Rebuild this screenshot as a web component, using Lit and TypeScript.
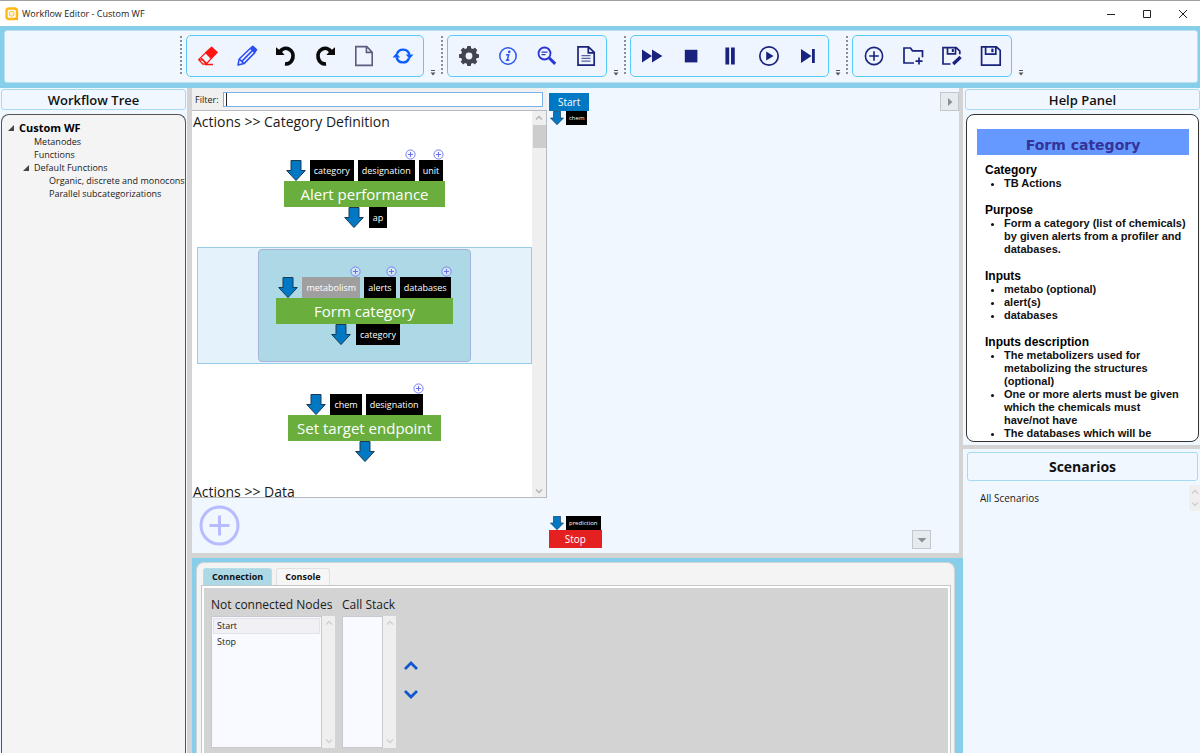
import { LitElement, html, css, svg, nothing } from "lit";
import { customElement, property, state } from "lit/decorators.js";
import { classMap } from "lit/directives/class-map.js";

interface Port {
  name: string;
  muted?: boolean;
  addable?: boolean;
}
interface FlowAction {
  title: string;
  inputs: Port[];
  outputs: Port[];
}

const ACTIONS: FlowAction[] = [
  {
    title: "Alert performance",
    inputs: [{ name: "category" }, { name: "designation", addable: true }, { name: "unit", addable: true }],
    outputs: [{ name: "ap" }],
  },
  {
    title: "Form category",
    inputs: [
      { name: "metabolism", muted: true, addable: true },
      { name: "alerts", addable: true },
      { name: "databases", addable: true },
    ],
    outputs: [{ name: "category" }],
  },
  {
    title: "Set target endpoint",
    inputs: [{ name: "chem" }, { name: "designation", addable: true }],
    outputs: [],
  },
];

const HELP = [
  { title: "Category", items: ["TB Actions"] },
  { title: "Purpose", items: ["Form a category (list of chemicals) by given alerts from a profiler and databases."] },
  { title: "Inputs", items: ["metabo (optional)", "alert(s)", "databases"] },
  {
    title: "Inputs description",
    items: [
      "The metabolizers used for metabolizing the structures (optional)",
      "One or more alerts must be given which the chemicals must have/not have",
      "The databases which will be",
    ],
  },
];

const gearTeeth = [0, 45, 90, 135, 180, 225, 270, 315].map(
  (a) => svg`<rect x="9" y="1" width="4" height="5" rx="0.8" transform="rotate(${a} 11 11)"/>`
);

const ICONS: Record<string, unknown> = {
  erase: svg`<g fill="none" stroke="#ff1414" stroke-width="1.3" stroke-linejoin="round">
    <path d="M8.800 7.600 14.600 2.200l5.600 5.200-5.800 6z" fill="#ff1414"/><path d="M8.800 7.600 1.600 14.600 6 19.200h3l5.400-5.800zM3.800 12.600l5.600 5.600M1.600 14.600l4.200.4 3.400 4M8 19.500h8"/></g>`,
  edit: svg`<g fill="none" stroke="#2a4cf5" stroke-width="1.500" stroke-linejoin="round">
    <path d="M2 20l1.200-6L14.400 3.200l4.400 4.400L8 18.600z"/><path d="M3.200 14l4.800 4.600M5.800 16.400L16.600 5.400"/><path d="M15.200 2.600l1.600-1.400 3.800 3.600-1.400 1.800z" fill="#2a4cf5"/></g>`,
  undo: svg`<path d="M5 6.600A7.200 7.800 0 1 1 10 18.900" fill="none" stroke="#0a0a0a" stroke-width="3.800"/><path d="M1 2.200V10h8.600L7 7z" fill="#0a0a0a"/>`,
  redo: svg`<path d="M17 6.600A7.200 7.800 0 1 0 12 18.900" fill="none" stroke="#0a0a0a" stroke-width="3.800"/><path d="M21 2.200V10h-8.600L15 7z" fill="#0a0a0a"/>`,
  page: svg`<path d="M2.800 1.600h11l5.400 5.600v13.200H2.800zM13.400 1.800v5.600h5.600" fill="none" stroke="#5c5c7c" stroke-width="1.600"/>`,
  sync: svg`<g fill="none" stroke="#0b5cff" stroke-width="2.400"><path d="M5 8.800a6.500 6.500 0 0 1 12.400.8"/><path d="M17 13.200a6.500 6.500 0 0 1-12.400-.8"/></g>
    <path d="M13.800 9.400h7.600l-3.800 4.600zM.6 12.600h7.600L4.400 8z" fill="#0b5cff"/>`,
  gear: svg`<g fill="#44444f">${gearTeeth}</g><circle cx="11" cy="11" r="5.700" fill="none" stroke="#44444f" stroke-width="4.600"/>`,
  info: svg`<circle cx="11" cy="11" r="8.200" fill="none" stroke="#2a55ee" stroke-width="1.500"/><circle cx="12.200" cy="6.900" r="1.300" fill="#2a55ee"/>
    <path d="M9 9.800h2.700l-1.400 5.200h2M8.800 15.200h3" fill="none" stroke="#2a55ee" stroke-width="1.500"/>`,
  search: svg`<g fill="none" stroke="#2a35d8"><circle cx="8.500" cy="8.500" r="6" stroke-width="1.800"/><path d="M5.500 7.200h6M5.500 9.700h4" stroke-width="1.300"/><path d="M13.200 13l6 5.800" stroke-width="3"/></g>`,
  report: svg`<path d="M3 1.800h10.500l5.700 5.600v12.800H3zM13.300 2v5.800h5.700" fill="none" stroke="#1d2378" stroke-width="1.700"/>
    <path d="M6.500 10.600h9M6.500 13.400h9M6.500 16.200h9" stroke="#5a60a8" stroke-width="1.200"/>`,
  forward: svg`<path d="M1 4.500 11 11 1 17.500zM11 4.500 21.400 11 11 17.500z" fill="#19237e"/>`,
  stop: svg`<path d="M4.800 4.800h12.600v12.600H4.800z" fill="#19237e"/>`,
  pause: svg`<path d="M6.400 2.600h3.800v16.800H6.400zM12 2.600h3.800v16.800H12z" fill="#19237e"/>`,
  play: svg`<circle cx="11" cy="11" r="9.200" fill="none" stroke="#19237e" stroke-width="1.700"/><path d="M8.200 6.600 15.600 11l-7.400 4.400z" fill="#19237e"/>`,
  next: svg`<path d="M4 4 14.500 11 4 18zM15 4h2.800v14H15z" fill="#19237e"/>`,
  add: svg`<g fill="none" stroke="#19237e" stroke-width="1.600"><circle cx="11" cy="11" r="8.600"/><path d="M11 6.200v9.600M6.200 11h9.600"/></g>`,
  folder: svg`<path d="M12 18H2V3h6.500l2 2.800h10v6.400M17 12.600v7M13.500 16.100h7" fill="none" stroke="#19237e" stroke-width="1.700"/>`,
  saveas: svg`<g fill="none" stroke="#19237e" stroke-width="1.700"><path d="M9.500 19H2V2.600h13.200l3.600 3.600v3M6.500 2.600v6.200h8V2.600"/><path d="M11.800 4v3" stroke-width="2"/><path d="M12.200 19l7.400-7" stroke-width="3.200"/></g>`,
  save: svg`<g fill="none" stroke="#19237e" stroke-width="1.700"><path d="M1.600 1.800h14.800l3.800 3.600v14.800H1.600zM5.600 1.800v7.400h10.200V1.800"/><path d="M12.400 3.600v3.600" stroke-width="2.200"/></g>`,
};

const TOOLBARS: [string, string][][] = [
  [["erase", "Erase"], ["edit", "Edit"], ["undo", "Undo"], ["redo", "Redo"], ["page", "New"], ["sync", "Refresh"]],
  [["gear", "Settings"], ["info", "Info"], ["search", "Inspect"], ["report", "Report"]],
  [["forward", "Run all"], ["stop", "Stop"], ["pause", "Pause"], ["play", "Play"], ["next", "Step"]],
  [["add", "Add"], ["folder", "Add folder"], ["saveas", "Save as"], ["save", "Save"]],
];

const arrow = (width: number, height: number) => html`<svg class="arrow" width=${width} height=${height} viewBox="0 0 20 21" preserveAspectRatio="none" aria-hidden="true">
  <path d="M5 0.500h10v10h4.300L10 20.600 0.700 10.500H5z" fill="#0078c4" stroke="#1b3a52" stroke-width="1" />
</svg>`;

const chevron = (up: boolean, w = 8, color = "#b4b4b4", stroke = 1.5) => html`<svg width=${w} height=${w} viewBox="0 0 8 8" aria-hidden="true">
  <path d=${up ? "M1 5.500 4 2.500l3 3" : "M1 2.500l3 3 3-3"} fill="none" stroke=${color} stroke-width=${stroke} />
</svg>`;

const scrollStyles = css`
  .scroll {
    display: flex;
    flex-direction: column;
    justify-content: space-between;
    align-items: center;
    background: #efefef;
    box-sizing: border-box;
    padding: 2px 0;
  }
`;

@customElement("flow-node")
class FlowNode extends LitElement {
  @property({ attribute: false }) action!: FlowAction;
  @property({ type: Boolean }) selected = false;

  static styles = css`
    :host { display: block; height: 117px; box-sizing: border-box; }
    .item {
      height: 100%;
      box-sizing: border-box;
      border: 1px solid transparent;
      display: flex;
      justify-content: center;
      align-items: stretch;
      padding: 1px;
    }
    .card {
      display: flex;
      flex-direction: column;
      align-items: center;
      box-sizing: border-box;
      padding: 27px 17px 0;
      border: 1px solid transparent;
      border-radius: 4px;
    }
    .selected { background: #e4f3fb; border-color: #97cce6; }
    .selected .card { background: #add8e6; border-color: #a6b4dc; }
    .body { display: flex; flex-direction: column; align-items: stretch; }
    .ports { display: flex; justify-content: center; height: 21px; gap: 4px; padding: 0 2px; }
    .outputs { padding-right: 0; gap: 5px; }
    .port {
      position: relative;
      background: #000;
      color: #fff;
      font-size: 9px;
      line-height: 22px;
      padding: 0 4px;
    }
    .muted { background: #9f9f9f; }
    .badge { position: absolute; right: -1px; top: -11px; }
    .title { background: #6aae3e; color: #fff; font-size: 15px; line-height: 26px; text-align: center; padding: 0 9px; }
  `;

  render() {
    const { title, inputs, outputs } = this.action;
    return html`<div class=${classMap({ item: true, selected: this.selected })}>
      <div class="card">
        <div class="body">
          <div class="ports">
            ${arrow(20, 21)}
            ${inputs.map(
              (p) => html`<span class=${classMap({ port: true, muted: !!p.muted })}>${p.name}${p.addable
                ? html`<svg class="badge" width="11" height="11" viewBox="0 0 11 11"><circle cx="5.500" cy="5.500" r="4.600" fill="#f2f2ff" fill-opacity=".5" stroke="#7a80f0"/><path d="M5.500 3v5M3 5.500h5" stroke="#6a70e8"/></svg>`
                : nothing}</span>`
            )}
          </div>
          <div class="title">${title}</div>
          <div class="ports outputs">${arrow(20, 21)}${outputs.map((p) => html`<span class="port">${p.name}</span>`)}</div>
        </div>
      </div>
    </div>`;
  }
}

@customElement("tool-strip")
class ToolStrip extends LitElement {
  @property({ attribute: false }) tools: [string, string][] = [];

  static styles = css`
    :host { display: flex; align-items: center; }
    .grip { width: 2px; height: 40px; background: repeating-linear-gradient(#8c8c94 0 2px, transparent 2px 4px); margin-right: 4px; }
    .box { display: flex; height: 42px; box-sizing: border-box; border: 1px solid #56cbf7; border-radius: 5px; padding: 0 1px; background: #eef5fe; }
    .tool { width: 39px; padding: 0; border: 0; background: none; display: grid; place-items: center; }
    .more { align-self: flex-end; width: 17px; height: 8px; display: grid; place-items: center; }
  `;

  render() {
    return html`<span class="grip"></span>
      <div class="box" role="toolbar">
        ${this.tools.map(
          ([icon, label]) => html`<button class="tool" aria-label=${label}><svg width="22" height="22" viewBox="0 0 22 22">${ICONS[icon]}</svg></button>`
        )}
      </div>
      <span class="more"><svg width="6" height="6" viewBox="0 0 6 6"><path d="M1 .5h4" stroke="#555"/><path d="M.5 2.500h5L3 5.500z" fill="#555"/></svg></span>`;
  }
}

@customElement("app-root")
class AppRoot extends LitElement {
  @state() private tab = "Connection";

  static styles = [
    scrollStyles,
    css`
      :host {
        display: grid;
        grid-template-rows: 26px 62px minmax(0, 1fr);
        height: 100vh;
        font-family: "Open Sans", "Noto Sans", sans-serif;
        font-size: 10px;
        color: #1a1a1a;
        background: #f0f7ff;
        overflow: hidden;
      }
      button { font: inherit; color: inherit; }
      .titlebar { display: flex; align-items: center; background: #fff; border-top: 1px solid #a0a0a0; padding-left: 5px; gap: 3px; font-size: 9px; }
      .caption { flex: 1; }
      .window { width: 36px; height: 24px; padding: 0 0 0 2px; border: 0; background: none; display: grid; place-items: center; }
      .toolbars { background: #87ceeb; padding: 4px 2px 5px 4px; }
      .bars {
        height: 53px;
        box-sizing: border-box;
        background: #f0f7ff;
        border: 1px solid #b9dff0;
        border-radius: 3px;
        display: flex;
        align-items: center;
        padding: 0 0 1px 175px;
      }
      .main { display: grid; grid-template-columns: 187px 5px minmax(0, 1fr) 4px 237px; min-height: 0; }
      .split { background: #d3d3d3; }
      .head {
        margin: 0;
        box-sizing: border-box;
        border: 1px solid #a5daf2;
        border-radius: 3px;
        text-align: center;
        font-size: 13px;
        font-weight: 600;
        color: #111;
      }
      .side { display: flex; flex-direction: column; min-height: 0; min-width: 0; }
      .left { padding: 1px 1px 0; gap: 4px; }
      .left .head, .help .head { height: 21px; line-height: 20px; flex: none; }
      .tree {
        flex: 1;
        border: 1px solid #555;
        border-bottom: 0;
        border-radius: 8px 8px 0 0;
        background: #f4f4f4;
        overflow: hidden;
        padding: 5px 0 0 2px;
        line-height: 13px;
        white-space: nowrap;
        font-size: 9px;
      }
      ul { list-style: none; margin: 0; padding: 0; }
      .tree ul ul { padding-left: 15px; }
      .row { display: flex; align-items: center; }
      .twisty { box-sizing: border-box; width: 15px; height: 13px; flex: none; border: 0; background: none; padding: 0 0 0 4px; display: flex; align-items: center; }
      .root { font-weight: 700; font-size: 11px; color: #000; height: 15px; }

      .center { display: grid; grid-template-rows: minmax(0, 1fr) 5px 195px; min-height: 0; min-width: 0; }
      .workspace { display: grid; grid-template-columns: 355px minmax(0, 1fr) auto; min-height: 0; }
      .palette { display: flex; flex-direction: column; min-height: 0; }
      .filter { height: 22px; flex: none; display: flex; align-items: center; gap: 4px; padding: 0 4px 0 3px; background: #f0f0f0; font-size: 9px; }
      .filter input {
        flex: 1;
        min-width: 0;
        height: 15px;
        box-sizing: border-box;
        border: 1px solid #7ab1e8;
        padding: 0 4px;
        outline: 0;
        font: inherit;
        background: linear-gradient(#222, #222) 2px 0 / 1px 100% no-repeat, #fff;
      }
      .list { display: flex; height: 388px; flex: none; box-sizing: border-box; border: 1px solid #b8bac2; border-left: 0; background: #fff; overflow: hidden; }
      .entries { flex: 1; min-width: 0; overflow: hidden; }
      .entries h3 { margin: 0 0 0 1px; font-size: 14px; font-weight: 400; line-height: 22px; height: 19px; color: #1a1a1a; }
      .entries flow-node { margin-left: 5px; }
      .list .scroll { width: 14px; justify-content: flex-start; }
      .list .scroll svg:first-child { margin: 1px 0 3px; }
      .thumb { width: 13px; height: 23px; background: #cdcdcd; flex: none; }
      .list .scroll svg:last-child { margin-top: auto; }
      .new { width: 41px; height: 41px; padding: 0; border: 0; background: none; margin: 7px 0 0 7px; }
      .canvas { display: flex; flex-direction: column; justify-content: space-between; align-items: flex-start; padding: 5px 0 5px 2px; }
      .end { display: flex; flex-direction: column; font-size: 10px; color: #fff; }
      .label { text-align: center; line-height: 18px; padding: 0 8px; }
      .start { background: #0078c4; padding: 0 9px; }
      .stop { background: #e42020; padding: 0 15px; }
      .pins { display: flex; gap: 2px; padding: 0 1px; height: 14px; }
      .pin { background: #000; font-size: 6px; line-height: 14px; padding: 0 3px; }
      .corners { display: flex; flex-direction: column; justify-content: space-between; align-items: flex-end; padding: 4px 0 4px; }
      .corner { width: 19px; height: 19px; box-sizing: border-box; border: 1px solid #c3c7cc; background: #e6ebf0; padding: 0; display: grid; place-items: center; }
      .corner.down { margin-right: 28px; }

      .bottom { position: relative; margin-right: -4px; background: #87ceeb; padding: 4px 8px 0 4px; display: flex; min-height: 0; }
      .panel { flex: 1; display: flex; flex-direction: column; background: #f4f4f4; border: 1px solid #cfd4d6; border-bottom: 0; border-radius: 8px 8px 0 0; padding: 5px 3px 0 4px; }
      .tabs { display: flex; gap: 4px; padding-left: 2px; }
      .tab { height: 17px; line-height: 16px; padding: 0 8px; border: 1px solid #e0e0e0; border-bottom: 0; border-radius: 3px 3px 0 0; background: #f6f6f6; font-size: 9px; font-weight: 700; color: #111; }
      .tab.on { background: #add8e6; border-color: #b8dce8; }
      .sheet { flex: 1; border: 1px solid #c6c6c6; border-bottom: 0; background: #fff; padding: 2px 2px 0; display: flex; }
      .content { flex: 1; background: #d3d3d3; display: flex; gap: 7px; padding: 7px 0 5px 7px; }
      .stack { display: flex; flex-direction: column; gap: 2px; min-width: 54px; }
      .stack.wide { min-width: 124px; }
      .stack h3 { margin: 0; font-size: 12px; font-weight: 400; line-height: 19px; white-space: nowrap; }
      .box { flex: 1; display: flex; }
      .rows { flex: 1; background: #f8faff; border: 1px solid #c8c8d0; font-size: 9px; padding: 1px; }
      .rows li { padding-left: 3px; border: 1px solid transparent; height: 14px; line-height: 14px; }
      .rows li.on { background: #f0f0f5; border-color: #e2e2e8; }
      .box .scroll { width: 13px; padding: 3px 0; }
      .box .scroll path { stroke: #d0d0d0; }
      .movers { display: flex; flex-direction: column; justify-content: center; gap: 12px; padding-top: 16px; }
      .mover { border: 0; background: none; padding: 0; width: 16px; height: 16px; }

      .right { display: flex; flex-direction: column; min-height: 0; }
      .help { box-sizing: border-box; display: flex; flex-direction: column; gap: 4px; padding: 1px 0 3px 2px; height: 357px; flex: none; }
      .doc {
        flex: 1;
        overflow: hidden;
        background: #fff;
        border: 1px solid #333;
        border-radius: 8px;
        margin: 0 1px;
        padding: 14px 9px 3px 10px;
        font: bold 11px/13px "Liberation Sans", Arial, sans-serif;
        color: #111;
      }
      .doctitle { margin: 0; background: #6699ff; color: #333399; font: bold 14px/26px "DejaVu Sans", Verdana, sans-serif; height: 26px; padding-top: 3px; box-sizing: border-box; text-align: center; }
      .doc section { padding: 0 3px 0 8px; margin-bottom: 13px; }
      .doc section:first-of-type { margin-top: 8px; }
      .doc h4 { margin: 0; font-size: 12px; line-height: 14px; color: #000; }
      .doc ul { list-style: disc; padding-left: 19px; }
      .divider { height: 4px; flex: none; background: #d3d3d3; }
      .scen { padding: 3px 0 0 4px; }
      .scen .head { height: 29px; line-height: 28px; margin-right: 2px; font-size: 14px; font-weight: 700; }
      .scenrow { display: flex; justify-content: space-between; align-items: center; height: 26px; margin-top: 4px; padding-left: 13px; }
      .scenrow .scroll { width: 11px; height: 26px; padding: 3px 0; }
      .scenrow .scroll path { stroke: #d0d0d0; }
    `,
  ];

  render() {
    const twisty = html`<svg width="6" height="6" viewBox="0 0 6 6"><path d="M6 0v6H0z" fill="#444" /></svg>`;
    return html`
      <header class="titlebar">
        <svg width="14" height="14" viewBox="0 0 14 14"><rect x="1.500" y="1.500" width="10.500" height="10.500" rx="2.500" fill="none" stroke="#fdb813" stroke-width="2.400"/><rect x="4.500" y="4.500" width="4.500" height="4.500" rx="1.200" fill="#fff3cc" stroke="#fba919" stroke-width=".8"/><path d="M8 11h5v2.600z" fill="#fba919"/></svg>
        <span class="caption">Workflow Editor - Custom WF</span>
        <div class="row">
          <button class="window" aria-label="Minimize"><svg width="10" height="10"><path d="M1 5.500h8" stroke="#222"/></svg></button>
          <button class="window" aria-label="Maximize"><svg width="10" height="10"><path d="M1.500 1.500h7v7h-7z" fill="none" stroke="#222"/></svg></button>
          <button class="window" aria-label="Close"><svg width="10" height="10"><path d="M1 1l8 8M9 1L1 9" stroke="#222"/></svg></button>
        </div>
      </header>

      <div class="toolbars"><div class="bars">${TOOLBARS.map((t) => html`<tool-strip .tools=${t}></tool-strip>`)}</div></div>

      <main class="main">
        <aside class="side left">
          <h2 class="head">Workflow Tree</h2>
          <div class="tree">
            <ul>
              <li>
                <div class="row root"><button class="twisty" aria-label="Collapse">${twisty}</button>Custom WF</div>
                <ul>
                  <li class="row"><span class="twisty"></span>Metanodes</li>
                  <li class="row"><span class="twisty"></span>Functions</li>
                  <li>
                    <div class="row"><button class="twisty" aria-label="Collapse">${twisty}</button>Default Functions</div>
                    <ul>
                      <li class="row"><span class="twisty"></span>Organic, discrete and monoconstituent</li>
                      <li class="row"><span class="twisty"></span>Parallel subcategorizations</li>
                    </ul>
                  </li>
                </ul>
              </li>
            </ul>
          </div>
        </aside>
        <div class="split"></div>

        <div class="center">
          <div class="workspace">
            <div class="palette">
              <div class="filter"><label for="filter">Filter:</label><input id="filter" type="text" /></div>
              <div class="list">
                <div class="entries">
                  <h3>Actions &gt;&gt; Category Definition</h3>
                  ${ACTIONS.map((a, i) => html`<flow-node .action=${a} ?selected=${i === 1}></flow-node>`)}
                  <h3>Actions &gt;&gt; Data</h3>
                </div>
                <div class="scroll">${chevron(true)}<span class="thumb"></span>${chevron(false)}</div>
              </div>
              <button class="new" aria-label="Add"><svg width="41" height="41" viewBox="0 0 41 41"><g fill="none" stroke="#b6bcff" stroke-width="3"><circle cx="20.500" cy="20.500" r="18.500"/><path d="M20.500 10.500v20M10.500 20.500h20"/></g></svg></button>
            </div>
            <div class="canvas">
              <div class="end">
                <div class="label start">Start</div>
                <div class="pins">${arrow(14, 14)}<span class="pin">chem</span></div>
              </div>
              <div class="end">
                <div class="pins">${arrow(14, 14)}<span class="pin">prediction</span></div>
                <div class="label stop">Stop</div>
              </div>
            </div>
            <div class="corners">
              <button class="corner" aria-label="Expand right"><svg width="10" height="10"><path d="M3 1v8l4.500-4z" fill="#8a9299"/></svg></button>
              <button class="corner down" aria-label="Expand down"><svg width="10" height="10"><path d="M.5 3h9L5 7.500z" fill="#8a9299"/></svg></button>
            </div>
          </div>
          <div class="split"></div>
          <section class="bottom">
            <div class="panel">
              <div class="tabs" role="tablist">
                ${["Connection", "Console"].map(
                  (t) => html`<button role="tab" class=${classMap({ tab: true, on: this.tab === t })} @click=${() => (this.tab = t)}>${t}</button>`
                )}
              </div>
              <div class="sheet">
                <div class="content">
                  <div class="stack wide">
                    <h3>Not connected Nodes</h3>
                    <div class="box"><ul class="rows"><li class="on">Start</li><li>Stop</li></ul><div class="scroll">${chevron(true)}${chevron(false)}</div></div>
                  </div>
                  <div class="stack">
                    <h3>Call Stack</h3>
                    <div class="box"><ul class="rows"></ul><div class="scroll">${chevron(true)}${chevron(false)}</div></div>
                  </div>
                  <div class="movers">
                    <button class="mover" aria-label="Move up">${chevron(true, 16, "#1257cc", 1.4)}</button>
                    <button class="mover" aria-label="Move down">${chevron(false, 16, "#1257cc", 1.4)}</button>
                  </div>
                </div>
              </div>
            </div>
          </section>
        </div>
        <div class="split"></div>

        <aside class="right">
          <div class="help">
            <h2 class="head">Help Panel</h2>
            <article class="doc">
              <h3 class="doctitle">Form category</h3>
              ${HELP.map((s) => html`<section><h4>${s.title}</h4><ul>${s.items.map((i) => html`<li>${i}</li>`)}</ul></section>`)}
            </article>
          </div>
          <div class="divider"></div>
          <div class="scen">
            <h2 class="head">Scenarios</h2>
            <div class="scenrow"><span>All Scenarios</span><div class="scroll">${chevron(true)}${chevron(false)}</div></div>
          </div>
        </aside>
      </main>
    `;
  }
}
